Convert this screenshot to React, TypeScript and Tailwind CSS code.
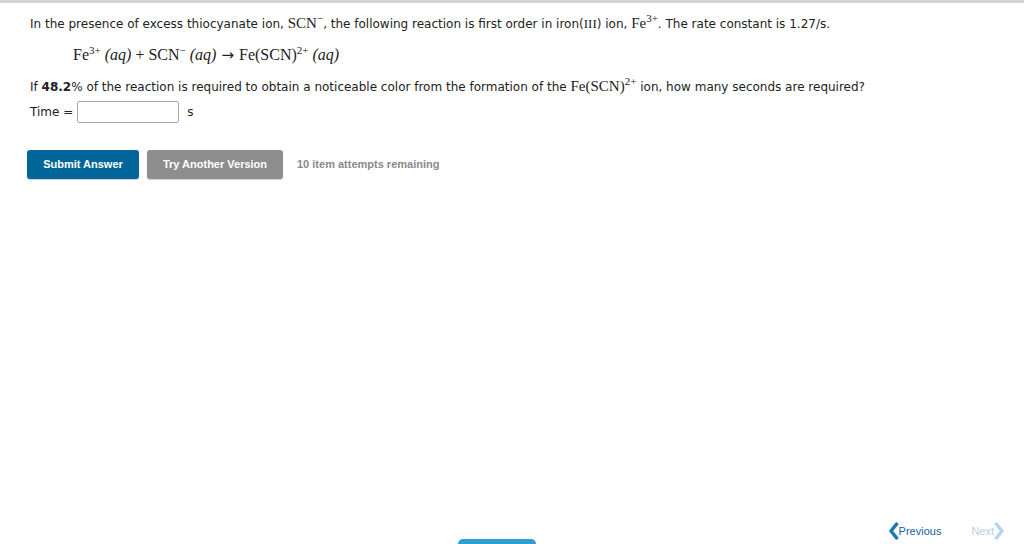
export default function App() {
  const math = "font-['Liberation_Serif','DejaVu_Serif',serif] text-[15px]";
  const sup = "text-[11px] align-[6px] leading-none";
  const arrow = "font-['DejaVu_Sans',sans-serif] text-[15px] px-[5px]";
  return (
    <div className="relative h-[544px] w-[1024px] overflow-hidden bg-white font-['DejaVu_Sans',Verdana,sans-serif] text-[12px] text-[#222]">
      <div className="h-[3px] w-full bg-[#d4d4d4]" />
      <div className="pl-[30px] pr-4">
        <p className="mt-[10px] leading-[16px]">
          In the presence of excess thiocyanate ion, <span className={math}>SCN<span className={sup}>−</span></span>, the following reaction is first order in iron(<span className="font-['Liberation_Serif',serif] text-[13px]">III</span>) ion, <span className={math}>Fe<span className={sup}>3+</span></span>. The rate constant is 1.27/s.
        </p>
        <p className={`${math} mt-[13px] pl-[43px] text-[16px] leading-[18px]`}>
          Fe<span className={sup}>3+</span> <i>(aq)</i> + SCN<span className={sup}>−</span> <i>(aq)</i>
          <span className={arrow}>→</span>Fe(SCN)<span className={sup}>2+</span> <i>(aq)</i>
        </p>
        <p className="mt-[12px] leading-[16px]">
          If <b>48.2</b>% of the reaction is required to obtain a noticeable color from the formation of the <span className={math}>Fe(SCN)<span className={sup}>2+</span></span> ion, how many seconds are required?
        </p>
        <div className="mt-[6px] flex items-center">
          <span>Time =</span>
          <input className="ml-[4px] h-[22px] w-[102px] rounded-[2px] border border-[#a9a9a9] bg-white" />
          <span className="ml-[8px]">s</span>
        </div>
        <div className="ml-[-3px] mt-[27px] flex items-center font-['Liberation_Sans',Arial,sans-serif] text-[11px] font-bold">
          <button className="h-[29px] w-[112px] rounded-[3px] bg-[#006699] text-white shadow-[0_1px_1px_rgba(0,0,0,0.2)]">
            Submit Answer
          </button>
          <button className="ml-[8px] h-[29px] w-[136px] rounded-[3px] bg-[#8e8e8e] text-white shadow-[0_1px_1px_rgba(0,0,0,0.2)]">
            Try Another Version
          </button>
          <span className="ml-[14px] text-[#8a8a8a]">10 item attempts remaining</span>
        </div>
      </div>
      <div className="absolute bottom-[4px] right-[20px] flex items-center font-['Liberation_Sans',Arial,sans-serif] text-[11px]">
        <svg width="10" height="18" viewBox="0 0 10 18">
          <path d="M8.5 1 L2 9 L8.5 17" fill="none" stroke="#1a7ab8" strokeWidth="3.5" strokeLinejoin="round" />
        </svg>
        <span className="text-[#1a5f99]">Previous</span>
        <span className="ml-[30px] text-[#b8cfe0]">Next</span>
        <svg width="10" height="18" viewBox="0 0 10 18">
          <path d="M1.5 1 L8 9 L1.5 17" fill="none" stroke="#b3d6ec" strokeWidth="3.5" strokeLinejoin="round" />
        </svg>
      </div>
      <div className="absolute bottom-[-10px] left-[458px] h-[15px] w-[78px] rounded-[5px] bg-[#2e9fd0]" />
    </div>
  );
}
